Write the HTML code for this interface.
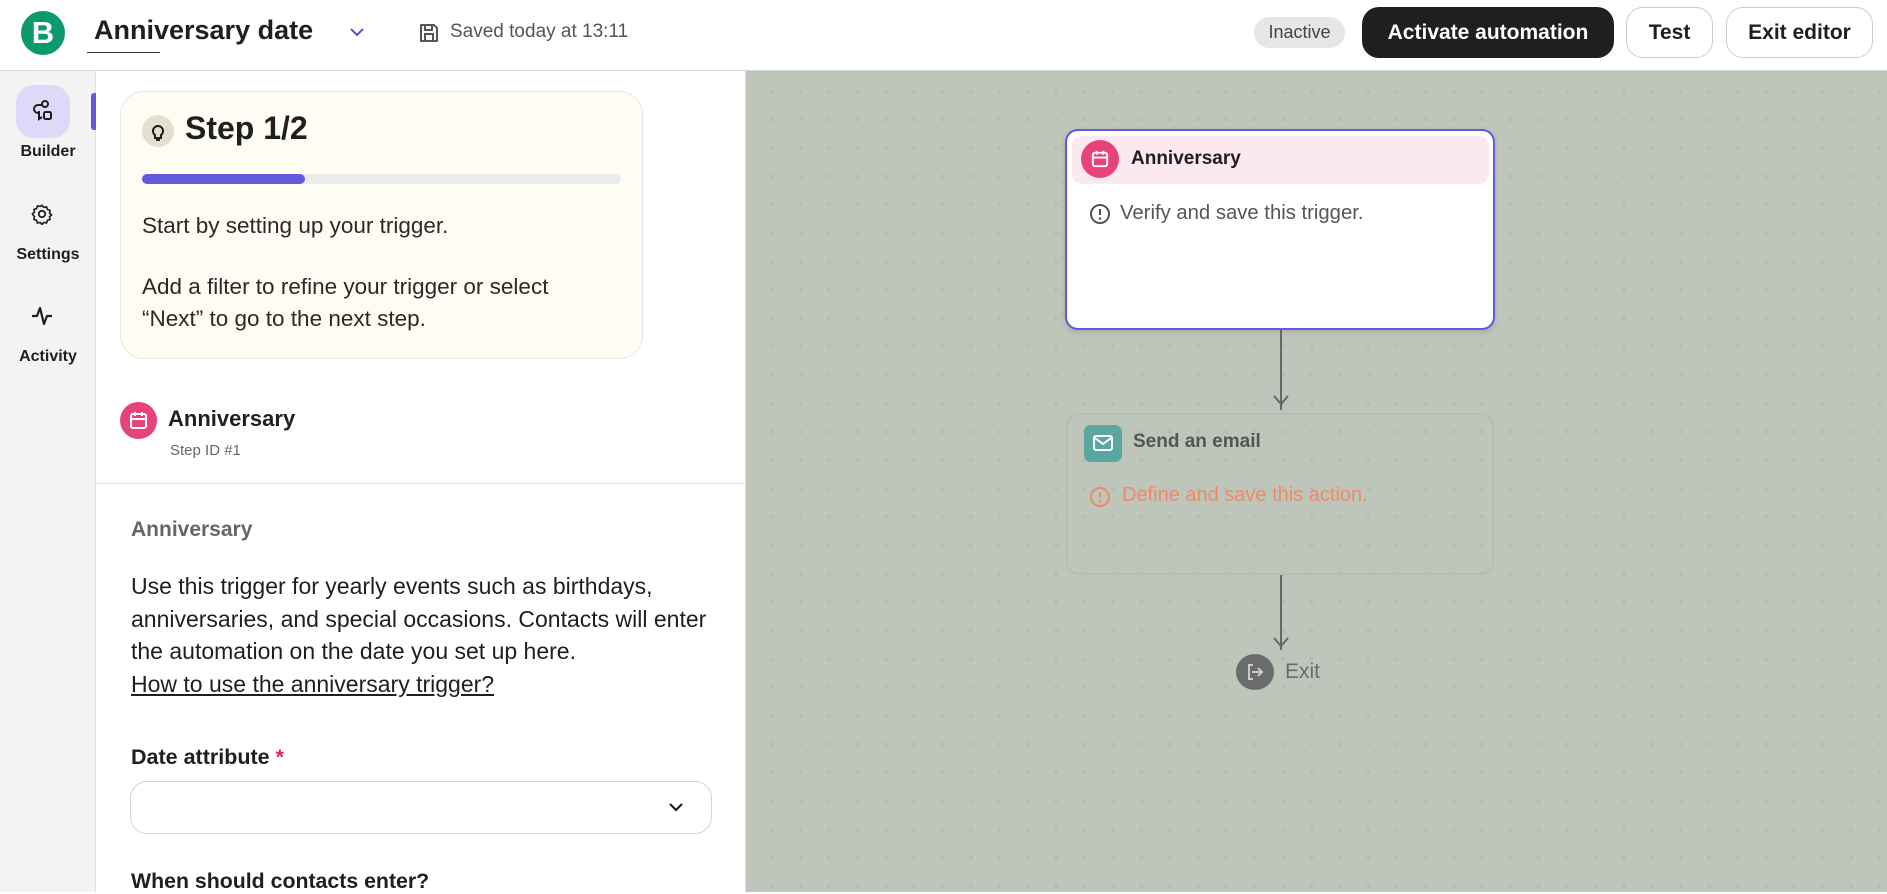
<!DOCTYPE html>
<html><head><meta charset="utf-8"><style>
*{box-sizing:border-box;margin:0;padding:0}
body{width:1887px;height:892px;overflow:hidden;font-family:"Liberation Sans",sans-serif;color:#1f1f1f;background:#fff;position:relative}
.abs{position:absolute}
.hdr{left:0;top:0;width:1887px;height:71px;background:#fff;border-bottom:1px solid #d8d8d8}
.btn{position:absolute;top:7px;height:51px;border-radius:17px;font-size:21px;display:flex;align-items:center;justify-content:center;font-weight:bold}
.side{left:0;top:71px;width:96px;height:821px;background:#f3f3f3;border-right:1px solid #e2e2e2}
.slab{position:absolute;width:96px;text-align:center;font-size:16px;font-weight:bold;color:#1f1f1f}
.panel{left:96px;top:71px;width:650px;height:821px;background:#fff;border-right:1px solid #ddd}
.canvas{left:746px;top:71px;width:1141px;height:821px;background-color:#bec5ba;background-image:radial-gradient(circle,#b5bcb1 1.8px,transparent 2.3px);background-size:28.4px 28.4px;background-position:12px 6px}
</style></head><body>
<div class="abs hdr">
  <div class="abs" style="left:21px;top:11px;width:44px;height:44px;border-radius:50%;background:#0b996e;color:#fff;font-size:31px;font-weight:bold;text-align:center;line-height:44px">B</div>
  <div class="abs" style="left:94px;top:15px;font-size:27px;font-weight:600;color:#1f1f1f">Anniversary date</div>
  <div class="abs" style="left:87px;top:52px;width:73px;height:1px;background:#333"></div>
  <svg class="abs" style="left:349px;top:26px" width="16" height="12" viewBox="0 0 16 12"><path d="M2 3l6 6 6-6" fill="none" stroke="#5a4fd6" stroke-width="2"/></svg>
  <svg class="abs" style="left:418px;top:22px" width="22" height="22" viewBox="0 0 22 22"><path d="M3 3h13l3 3v13H3z" fill="none" stroke="#555" stroke-width="2" stroke-linejoin="round"/><rect x="7" y="3" width="7" height="5" fill="none" stroke="#555" stroke-width="2"/><rect x="7" y="12" width="8" height="7" fill="none" stroke="#555" stroke-width="2"/></svg>
  <div class="abs" style="left:450px;top:21px;font-size:19px;color:#555">Saved today at 13:11</div>
  <div class="abs" style="left:1254px;top:17px;width:91px;height:31px;border-radius:16px;background:#e6e6e6;font-size:18px;color:#444;text-align:center;line-height:31px">Inactive</div>
  <div class="btn" style="left:1362px;width:252px;background:#1f1f1f;color:#fff">Activate automation</div>
  <div class="btn" style="left:1626px;width:87px;border:1px solid #ccc;color:#1f1f1f">Test</div>
  <div class="btn" style="left:1726px;width:147px;border:1px solid #ccc;color:#1f1f1f">Exit editor</div>
</div>
<div class="abs side">
  <div class="abs" style="left:16px;top:14px;width:54px;height:53px;border-radius:18px;background:#dcdaf8"></div>
  <svg class="abs" style="left:31px;top:28px" width="24" height="26" viewBox="0 0 24 26"><circle cx="14" cy="5" r="3" fill="none" stroke="#1f1f1f" stroke-width="2"/><path d="M11 6H7a4 4 0 0 0 0 8h2M8 12v8l3-2" fill="none" stroke="#1f1f1f" stroke-width="2"/><rect x="13" y="13" width="7" height="7" rx="1.5" fill="none" stroke="#1f1f1f" stroke-width="2"/></svg>
  <div class="abs" style="left:91px;top:22px;width:5px;height:37px;background:#6459dc;border-radius:3px 0 0 3px"></div>
  <div class="slab" style="top:72px">Builder</div>
  <svg class="abs" style="left:31px;top:132px" width="22" height="22" viewBox="0 0 24 24"><circle cx="12" cy="12" r="3.5" fill="none" stroke="#1f1f1f" stroke-width="2"/><path d="M12 2.5l2 2.3 3-.6.9 2.9 2.9.9-.6 3 2.3 2-2.3 2 .6 3-2.9.9-.9 2.9-3-.6-2 2.3-2-2.3-3 .6-.9-2.9-2.9-.9.6-3L1.5 12l2.3-2-.6-3 2.9-.9.9-2.9 3 .6z" fill="none" stroke="#1f1f1f" stroke-width="1.8" stroke-linejoin="round"/></svg>
  <div class="slab" style="top:175px">Settings</div>
  <svg class="abs" style="left:31px;top:233px" width="22" height="24" viewBox="0 0 22 24"><path d="M1 12h5l3-8 4 16 3-8h5" fill="none" stroke="#1f1f1f" stroke-width="2.2" stroke-linejoin="round"/></svg>
  <div class="slab" style="top:277px">Activity</div>
</div>
<div class="abs panel">
  <div class="abs" style="left:24px;top:20px;width:523px;height:268px;border-radius:24px;background:#fffcf4;border:1px solid #e8e6e0"></div>
  <div class="abs" style="left:46px;top:44px;width:32px;height:32px;border-radius:50%;background:#e4e0cf"></div>
  <svg class="abs" style="left:52px;top:49px" width="20" height="22" viewBox="0 0 20 22"><path d="M7 15a5 5 0 1 1 6 0v3H7z" fill="none" stroke="#1f1f1f" stroke-width="2"/><path d="M8 20h4" stroke="#1f1f1f" stroke-width="2"/></svg>
  <div class="abs" style="left:89px;top:39px;font-size:32px;font-weight:600">Step 1/2</div>
  <div class="abs" style="left:46px;top:103px;width:479px;height:10px;border-radius:5px;background:#ececec"></div>
  <div class="abs" style="left:46px;top:103px;width:163px;height:10px;border-radius:5px;background:#6459dc"></div>
  <div class="abs" style="left:46px;top:139px;font-size:22.5px;color:#2a2a2a;line-height:32px;white-space:nowrap">Start by setting up your trigger.</div>
  <div class="abs" style="left:46px;top:200px;font-size:22.5px;color:#2a2a2a;line-height:32px;white-space:nowrap">Add a filter to refine your trigger or select<br>“Next” to go to the next step.</div>
  <div class="abs" style="left:24px;top:331px;width:37px;height:37px;border-radius:50%;background:#e8427c"></div>
  <svg class="abs" style="left:32px;top:339px" width="21" height="21" viewBox="0 0 21 21"><rect x="3" y="4" width="15" height="14" rx="2" fill="none" stroke="#fff" stroke-width="2"/><path d="M3 9h15M7 2v4M14 2v4" stroke="#fff" stroke-width="2"/></svg>
  <div class="abs" style="left:72px;top:335px;font-size:22px;font-weight:600">Anniversary</div>
  <div class="abs" style="left:74px;top:371px;font-size:15px;color:#666">Step ID #1</div>
  <div class="abs" style="left:0;top:412px;width:650px;height:1px;background:#e0e0e0"></div>
  <div class="abs" style="left:35px;top:447px;font-size:21px;font-weight:bold;color:#666">Anniversary</div>
  <div class="abs" style="left:35px;top:499px;font-size:23px;line-height:32.5px;color:#1f1f1f;width:640px;white-space:nowrap">Use this trigger for yearly events such as birthdays,<br>anniversaries, and special occasions. Contacts will enter<br>the automation on the date you set up here.<br><span style="text-decoration:underline">How to use the anniversary trigger?</span></div>
  <div class="abs" style="left:35px;top:674px;font-size:21.5px;font-weight:bold">Date attribute <span style="color:#e0245e">*</span></div>
  <div class="abs" style="left:34px;top:710px;width:582px;height:53px;border-radius:17px;border:1px solid #d3d3d3"></div>
  <svg class="abs" style="left:572px;top:730px" width="16" height="12" viewBox="0 0 16 12"><path d="M2 3l6 6 6-6" fill="none" stroke="#1f1f1f" stroke-width="2.2"/></svg>
  <div class="abs" style="left:35px;top:798px;font-size:21.3px;font-weight:bold">When should contacts enter?</div>
</div>
<div class="abs canvas">
  <div class="abs" style="left:319px;top:58px;width:430px;height:201px;border-radius:13px;background:#fff;border:2px solid #6459dc;box-shadow:0 2px 6px rgba(0,0,0,.12)"></div>
  <div class="abs" style="left:326px;top:65px;width:417px;height:48px;border-radius:10px;background:#fce8ef"></div>
  <div class="abs" style="left:335px;top:69px;width:38px;height:38px;border-radius:50%;background:#e8427c"></div>
  <svg class="abs" style="left:344px;top:78px" width="20" height="20" viewBox="0 0 21 21"><rect x="3" y="4" width="15" height="14" rx="2" fill="none" stroke="#fff" stroke-width="2"/><path d="M3 9h15M7 2v4M14 2v4" stroke="#fff" stroke-width="2"/></svg>
  <div class="abs" style="left:385px;top:77px;font-size:19px;font-weight:bold;color:#1f1f1f">Anniversary</div>
  <svg class="abs" style="left:343px;top:132px" width="22" height="22" viewBox="0 0 22 22"><circle cx="11" cy="11" r="9" fill="none" stroke="#555" stroke-width="2"/><path d="M11 6v6" stroke="#555" stroke-width="2.2"/><circle cx="11" cy="15.5" r="1.3" fill="#555"/></svg>
  <div class="abs" style="left:374px;top:131px;font-size:20.3px;color:#555">Verify and save this trigger.</div>
  <div class="abs" style="left:534px;top:259px;width:2px;height:80px;background:#666"></div>
  <svg class="abs" style="left:526px;top:322px" width="18" height="14" viewBox="0 0 18 14"><path d="M2 3l7 8 7-8" fill="none" stroke="#666" stroke-width="2"/></svg>
  <div class="abs" style="left:320px;top:342px;width:428px;height:162px;border-radius:13px;border:2px solid #b6bdb2"></div>
  <div class="abs" style="left:338px;top:354px;width:38px;height:37px;border-radius:7px;background:#5aa6a1"></div>
  <svg class="abs" style="left:346px;top:362px" width="22" height="20" viewBox="0 0 22 20"><rect x="2" y="3" width="18" height="14" rx="2" fill="none" stroke="#fff" stroke-width="2"/><path d="M3 5l8 6 8-6" fill="none" stroke="#fff" stroke-width="2"/></svg>
  <div class="abs" style="left:387px;top:360px;font-size:19px;font-weight:bold;color:#555">Send an email</div>
  <svg class="abs" style="left:343px;top:415px" width="22" height="22" viewBox="0 0 22 22"><circle cx="11" cy="11" r="9" fill="none" stroke="#ef8a67" stroke-width="2"/><path d="M11 6v6" stroke="#ef8a67" stroke-width="2.2"/><circle cx="11" cy="15.5" r="1.3" fill="#ef8a67"/></svg>
  <div class="abs" style="left:376px;top:413px;font-size:20px;color:#ef8a67">Define and save this action.</div>
  <div class="abs" style="left:534px;top:504px;width:2px;height:75px;background:#666"></div>
  <svg class="abs" style="left:526px;top:564px" width="18" height="14" viewBox="0 0 18 14"><path d="M2 3l7 8 7-8" fill="none" stroke="#666" stroke-width="2"/></svg>
  <div class="abs" style="left:490px;top:583px;width:38px;height:36px;border-radius:50%;background:#6b6b6b"></div>
  <svg class="abs" style="left:498px;top:590px" width="22" height="22" viewBox="0 0 22 22"><path d="M9 4H5v14h4" fill="none" stroke="#ccc" stroke-width="2"/><path d="M8 11h10M14 7l4 4-4 4" fill="none" stroke="#ccc" stroke-width="2"/></svg>
  <div class="abs" style="left:539px;top:589px;font-size:21px;color:#6b6b6b">Exit</div>
</div>
</body></html>
